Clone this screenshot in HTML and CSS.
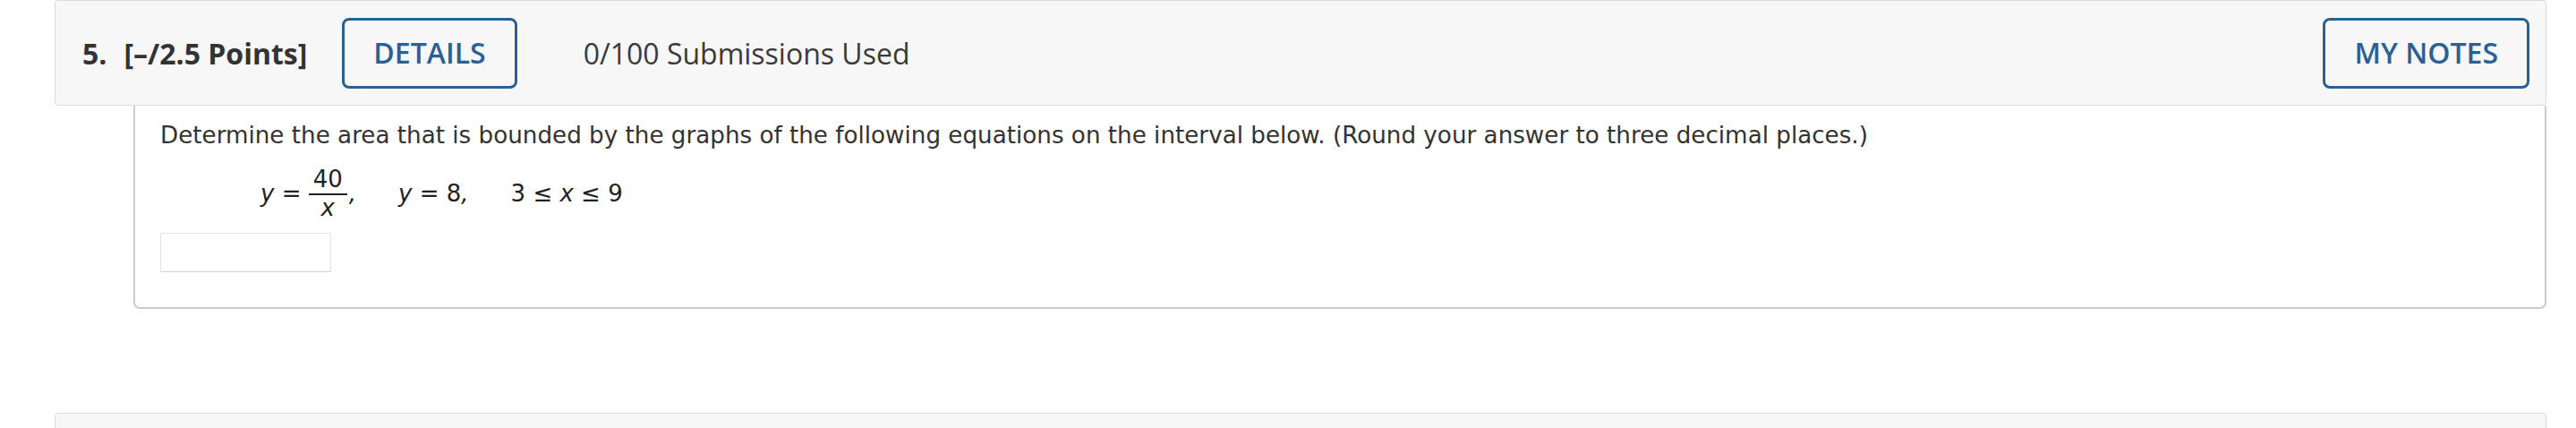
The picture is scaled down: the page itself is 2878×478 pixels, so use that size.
FILE: index.html
```html
<!DOCTYPE html>
<html lang="en">
<head>
<meta charset="utf-8">
<title>Question 5</title>
<link rel="stylesheet" href="styles.css">
</head>
<body>
<div class="page">
  <section class="question">
    <header class="q-head">
      <span class="q-num">5.</span>
      <span class="q-points">[–/2.5 Points]</span>
      <button class="btn btn-details" type="button">DETAILS</button>
      <span class="q-subs">0/100 Submissions Used</span>
      <button class="btn btn-notes" type="button">MY NOTES</button>
    </header>
    <div class="q-body">
      <p class="q-text">Determine the area that is bounded by the graphs of the following equations on the interval below. (Round your answer to three decimal places.)</p>
      <div class="math">
        <span class="eq"><i>y</i> = </span>
        <span class="frac"><span class="num">40</span><span class="bar"></span><span class="den"><i>x</i></span></span>
        <span class="eq sep"><i>,</i></span>
        <span class="eq sep"><i>y</i> = 8<i>,</i></span>
        <span class="eq">3 ≤ <i>x</i> ≤ 9</span>
      </div>
      <input class="answer" type="text" aria-label="answer">
    </div>
  </section>
  <section class="question next">
    <header class="q-head stub"></header>
  </section>
</div>
</body>
</html>
```

FILE: styles.css
```css
html, body {
  margin: 0;
  padding: 0;
  background: #ffffff;
}

.page {
  padding-left: 61px;
  width: 2784px;
  height: 478px;
  overflow: hidden;
}

.q-head {
  box-sizing: border-box;
  height: 118px;
  display: flex;
  align-items: center;
  padding: 0 18px 0 30px;
  background: #f7f7f7;
  border: 1px solid #dcdcdc;
  border-radius: 4px;
  font-family: "Open Sans", "Liberation Sans", sans-serif;
  font-size: 32px;
  color: #333333;
}

.q-num,
.q-points {
  font-weight: 700;
}

.q-points {
  margin-left: 19px;
}

.btn {
  box-sizing: border-box;
  height: 79px;
  padding: 0 32px;
  border: 3px solid #2a6195;
  border-radius: 8px;
  background: transparent;
  color: #2a6195;
  font-family: "Open Sans", "Liberation Sans", sans-serif;
  font-size: 32px;
  font-weight: 600;
  line-height: 1;
}

.btn-details {
  margin-left: 39px;
}

.q-subs {
  margin-left: 74px;
  font-weight: 400;
  color: #3a3a3a;
}

.btn-notes {
  margin-left: auto;
}

.q-body {
  margin-left: 88px;
  padding: 18px 28px 39px;
  border: 2px solid #cccccc;
  border-top: none;
  border-radius: 0 0 7px 7px;
  font-family: "DejaVu Sans", Verdana, sans-serif;
  color: #333333;
}

.q-text {
  margin: 0;
  font-size: 26.2px;
  line-height: 30px;
}

.math {
  display: flex;
  align-items: center;
  margin: 20px 0 0 112px;
  font-size: 26px;
  line-height: 28px;
  color: #222222;
}

.eq {
  white-space: pre;
}

.sep {
  margin-right: 47px;
}

.frac {
  display: inline-flex;
  flex-direction: column;
  align-items: center;
  margin: 0 2px 0 0;
}

.num {
  padding: 0 5px 2px;
}

.bar {
  align-self: stretch;
  height: 2px;
  background: #222222;
}

.den {
  display: block;
}

.answer {
  display: block;
  box-sizing: border-box;
  width: 191px;
  height: 44px;
  margin-top: 14px;
  border: 1px solid #e2e2e2;
  border-bottom-color: #cfcfcf;
  border-radius: 2px;
  background: #ffffff;
}

.next {
  margin-top: 116px;
}
```
